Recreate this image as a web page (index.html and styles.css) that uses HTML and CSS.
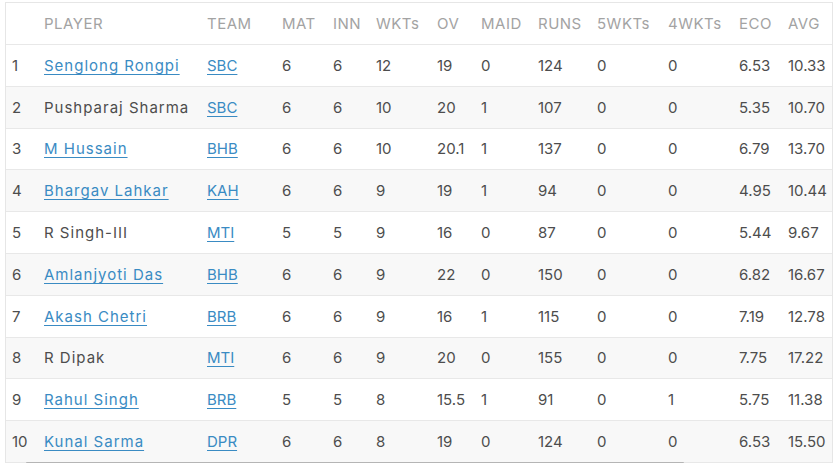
FILE: index.html
```html
<!DOCTYPE html>
<html>
<head>
<meta charset="utf-8">
<link rel="stylesheet" href="styles.css">
</head>
<body>
<div class="wrap">
<table class="stats">
<colgroup>
<col class="c-idx"><col class="c-player"><col class="c-team"><col class="c-mat"><col class="c-inn"><col class="c-wkt"><col class="c-ov"><col class="c-maid"><col class="c-runs"><col class="c-5w"><col class="c-4w"><col class="c-eco"><col class="c-avg">
</colgroup>
<thead>
<tr><th></th><th>PLAYER</th><th>TEAM</th><th>MAT</th><th>INN</th><th>WKTs</th><th>OV</th><th>MAID</th><th>RUNS</th><th>5WKTs</th><th>4WKTs</th><th>ECO</th><th>AVG</th></tr>
</thead>
<tbody>
<tr><td>1</td><td class="name"><a href="#">Senglong Rongpi</a></td><td><a href="#">SBC</a></td><td>6</td><td>6</td><td>12</td><td>19</td><td>0</td><td>124</td><td>0</td><td>0</td><td>6.53</td><td>10.33</td></tr>
<tr><td>2</td><td class="name">Pushparaj Sharma</td><td><a href="#">SBC</a></td><td>6</td><td>6</td><td>10</td><td>20</td><td>1</td><td>107</td><td>0</td><td>0</td><td>5.35</td><td>10.70</td></tr>
<tr><td>3</td><td class="name"><a href="#">M Hussain</a></td><td><a href="#">BHB</a></td><td>6</td><td>6</td><td>10</td><td>20.1</td><td>1</td><td>137</td><td>0</td><td>0</td><td>6.79</td><td>13.70</td></tr>
<tr><td>4</td><td class="name"><a href="#">Bhargav Lahkar</a></td><td><a href="#">KAH</a></td><td>6</td><td>6</td><td>9</td><td>19</td><td>1</td><td>94</td><td>0</td><td>0</td><td>4.95</td><td>10.44</td></tr>
<tr><td>5</td><td class="name">R Singh-III</td><td><a href="#">MTI</a></td><td>5</td><td>5</td><td>9</td><td>16</td><td>0</td><td>87</td><td>0</td><td>0</td><td>5.44</td><td>9.67</td></tr>
<tr><td>6</td><td class="name"><a href="#">Amlanjyoti Das</a></td><td><a href="#">BHB</a></td><td>6</td><td>6</td><td>9</td><td>22</td><td>0</td><td>150</td><td>0</td><td>0</td><td>6.82</td><td>16.67</td></tr>
<tr><td>7</td><td class="name"><a href="#">Akash Chetri</a></td><td><a href="#">BRB</a></td><td>6</td><td>6</td><td>9</td><td>16</td><td>1</td><td>115</td><td>0</td><td>0</td><td>7.19</td><td>12.78</td></tr>
<tr><td>8</td><td class="name">R Dipak</td><td><a href="#">MTI</a></td><td>6</td><td>6</td><td>9</td><td>20</td><td>0</td><td>155</td><td>0</td><td>0</td><td>7.75</td><td>17.22</td></tr>
<tr><td>9</td><td class="name"><a href="#">Rahul Singh</a></td><td><a href="#">BRB</a></td><td>5</td><td>5</td><td>8</td><td>15.5</td><td>1</td><td>91</td><td>0</td><td>1</td><td>5.75</td><td>11.38</td></tr>
<tr><td>10</td><td class="name"><a href="#">Kunal Sarma</a></td><td><a href="#">DPR</a></td><td>6</td><td>6</td><td>8</td><td>19</td><td>0</td><td>124</td><td>0</td><td>0</td><td>6.53</td><td>15.50</td></tr>
</tbody>
</table>
<div class="thumb"></div>
</div>
</body>
</html>
```
FILE: styles.css
```css
html, body {
  margin: 0;
  padding: 0;
  background: #ffffff;
}
body {
  font-family: "Inter", "Open Sans", sans-serif;
  overflow: hidden;
}
.wrap {
  position: relative;
  margin: 2px 0 0 5px;
  width: 828px;
  border: 1px solid #e6e6e6;
  border-bottom: none;
  box-sizing: border-box;
}
.stats {
  width: 826px;
  table-layout: fixed;
  border-collapse: collapse;
}
.c-idx { width: 32px; }
.c-player { width: 163px; }
.c-team { width: 75px; }
.c-mat { width: 51px; }
.c-inn { width: 43px; }
.c-wkt { width: 61px; }
.c-ov { width: 44px; }
.c-maid { width: 57px; }
.c-runs { width: 59px; }
.c-5w { width: 71px; }
.c-4w { width: 71px; }
.c-eco { width: 49px; }
.c-avg { width: 50px; }
.stats th, .stats td {
  padding: 0 0 0 6px;
  text-align: left;
  white-space: nowrap;
  overflow: visible;
}
.stats th {
  height: 41px;
  font-size: 15px;
  font-weight: 400;
  color: #a3a3a3;
  letter-spacing: 0.5px;
  border-bottom: 1px solid #e8e8e8;
}
.stats td {
  height: 40.8px;
  font-size: 15px;
  color: #4d4d4d;
  border-bottom: 1px solid #e8e8e8;
}
.stats td.name {
  letter-spacing: 1px;
}
.stats tbody tr:nth-child(even) td {
  background: #f8f8f8;
}
.stats a {
  color: #3a8bc3;
  text-decoration: underline;
  text-underline-offset: 3px;
  text-decoration-thickness: 1px;
}
.thumb {
  position: absolute;
  left: 20px;
  bottom: -4px;
  width: 658px;
  height: 5px;
  background: #b5b5b5;
  border-radius: 1px;
}
```
